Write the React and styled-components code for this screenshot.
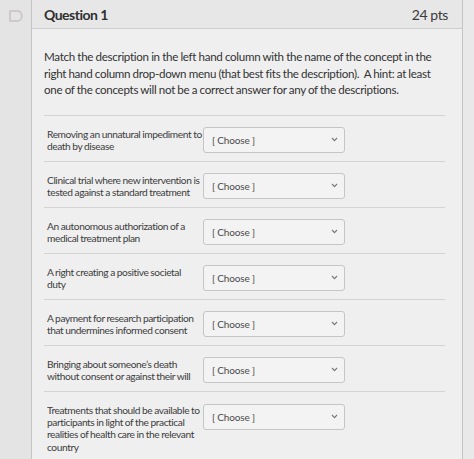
import React from 'react';
import styled, { createGlobalStyle } from 'styled-components';

const GlobalStyle = createGlobalStyle`
  html, body {
    margin: 0;
    padding: 0;
    background: #e3e3e3;
    font-family: Lato, "Open Sans", sans-serif;
    color: #3b3b3b;
  }
`;

const Page = styled.div`
  display: flex;
  width: 474px;
  height: 459px;
  overflow: hidden;
`;

const Gutter = styled.div`
  width: 31px;
  flex-shrink: 0;
  padding-top: 6px;
  padding-left: 9px;
  box-sizing: border-box;
  background: #e4e4e4;
`;

const Card = styled.div`
  width: 432px;
  flex-shrink: 0;
  border-left: 1px solid #c4c4c4;
  border-right: 1px solid #c4c4c4;
  background: #efefef;
  box-sizing: border-box;
`;

const RightEdge = styled.div`
  flex: 1;
  background: #e9e9e9;
`;

const Header = styled.div`
  height: 28px;
  display: flex;
  align-items: center;
  justify-content: space-between;
  padding: 0 14px 0 12px;
  background: #e7e7e7;
  border-bottom: 1px solid #cdcdcd;
`;

const Title = styled.h2`
  margin: 0;
  font-size: 14px;
  font-weight: 700;
  letter-spacing: -0.5px;
  color: #2f2f2f;
`;

const Points = styled.span`
  font-size: 14px;
  letter-spacing: -0.4px;
  color: #3a3a3a;
`;

const Body = styled.div`
  padding: 20px 17px 0 12px;
`;

const Prompt = styled.p`
  margin: 0 0 16px;
  font-size: 11.6px;
  line-height: 16.5px;
  letter-spacing: -0.3px;
  word-spacing: -0.3px;
  color: #333;
`;

const Row = styled.div`
  display: flex;
  align-items: flex-start;
  padding: 12px 0 8px 3px;
  border-top: 1px solid #d3d3d3;
`;

const Description = styled.div`
  width: 156px;
  flex-shrink: 0;
  font-size: 10.2px;
  line-height: 12.4px;
  letter-spacing: -0.42px;
  word-spacing: -0.2px;
  color: #3d3d3d;
`;

const Line = styled.span`
  display: block;
  white-space: nowrap;
`;

const Select = styled.div`
  width: 142px;
  height: 26px;
  margin-top: ${p => p.offset || 0}px;
  box-sizing: border-box;
  display: flex;
  align-items: center;
  justify-content: space-between;
  padding: 0 6px 0 8px;
  border: 1px solid #c5c5c5;
  border-radius: 3px;
  background: #f3f3f3;
  font-size: 10px;
  letter-spacing: -0.15px;
  color: #4a4a4a;
`;

const Bookmark = () => (
  <svg width="14" height="12" viewBox="0 0 14 12">
    <path d="M1 1 H9 Q11 1 12 3 L13 6 L12 9 Q11 11 9 11 H1 Z" fill="none" stroke="#c8c0c1" strokeWidth="1.4" strokeLinejoin="round" />
  </svg>
);

const Chevron = () => (
  <svg width="7" height="5" viewBox="0 0 7 5">
    <polyline points="1,1 3.5,3.6 6,1" fill="none" stroke="#777" strokeWidth="1.1" />
  </svg>
);

const items = [
  ['Removing an unnatural impediment to', 'death by disease'],
  ['Clinical trial where new intervention is', 'tested against a standard treatment'],
  ['An autonomous authorization of a', 'medical treatment plan'],
  ['A right creating a positive societal', 'duty'],
  ['A payment for research participation', 'that undermines informed consent'],
  ['Bringing about someone\u2019s death', 'without consent or against their will'],
  [
    'Treatments that should be available to',
    'participants in light of the practical',
    'realities of health care in the relevant',
    'country',
  ],
];

export default function App() {
  return (
    <>
      <GlobalStyle />
      <Page>
        <Gutter>
          <Bookmark />
        </Gutter>
        <Card>
          <Header>
            <Title>Question 1</Title>
            <Points>24 pts</Points>
          </Header>
          <Body>
            <Prompt>
              Match the description in the left hand column with the name of the concept in the right hand column drop-down menu (that best fits the description).&nbsp; A hint: at least one of the concepts will not be a correct answer for any of the descriptions.
            </Prompt>
            {items.map((lines, i) => (
              <Row key={i}>
                <Description>
                  {lines.map((l, j) => (
                    <Line key={j}>{l}</Line>
                  ))}
                </Description>
                <Select offset={i === 6 ? 0 : -1}>
                  <span>[ Choose ]</span>
                  <Chevron />
                </Select>
              </Row>
            ))}
          </Body>
        </Card>
        <RightEdge />
      </Page>
    </>
  );
}
